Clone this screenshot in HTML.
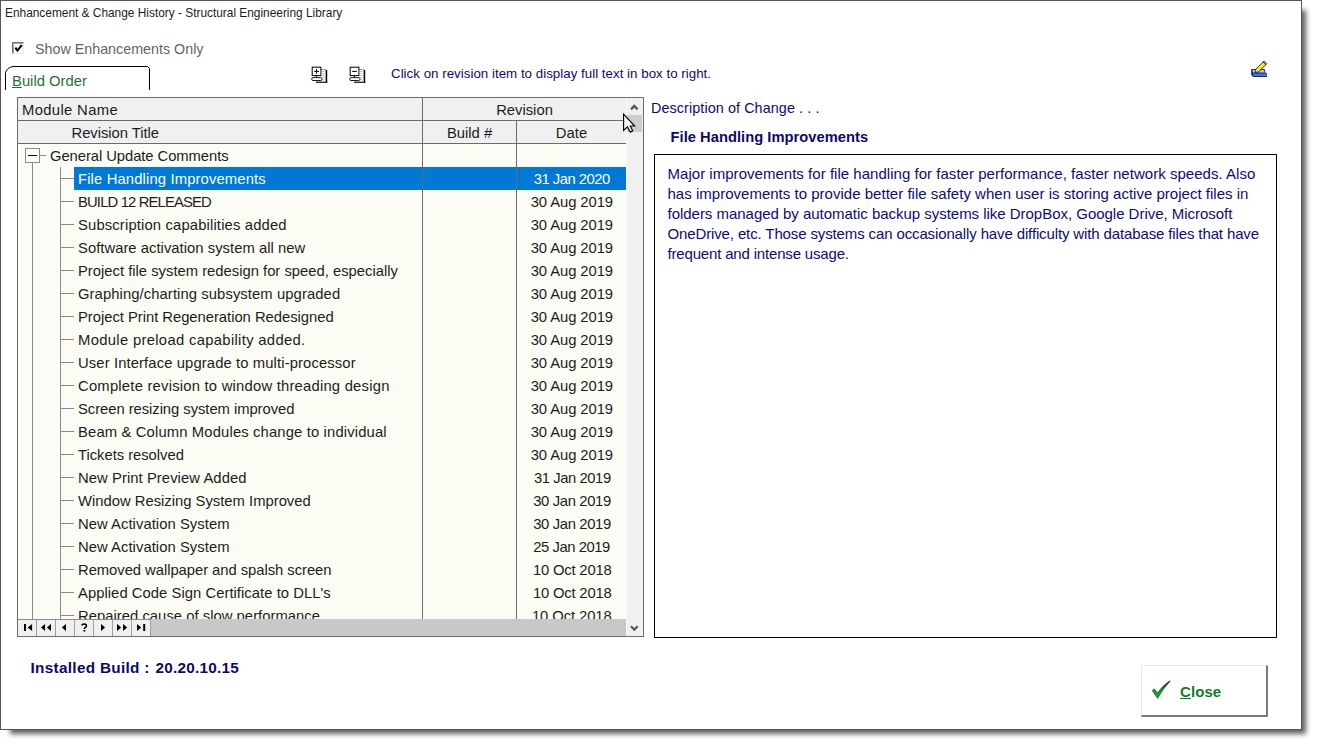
<!DOCTYPE html><html><head><meta charset="utf-8"><style>
html,body{margin:0;padding:0;background:#fff;width:1317px;height:745px;overflow:hidden;position:relative;font-family:"Liberation Sans",sans-serif;}
.t{position:absolute;white-space:pre;}
.a{position:absolute;}
</style></head><body>
<div class="a" style="left:0;top:0;width:1300px;height:728px;border:1px solid #555;background:#fff;box-shadow:7px 7px 5px -3px rgba(0,0,0,0.62);"></div>
<div class="t" style="left:5px;top:5.28px;font-size:11.9px;line-height:16px;color:#1c1c1c;letter-spacing:-0.007px;">Enhancement &amp; Change History - Structural Engineering Library</div>
<div class="a" style="left:12px;top:42px;width:10px;height:10px;border-top:1px solid #6e6e6e;border-left:1px solid #6e6e6e;border-right:1px solid #e8e8e8;border-bottom:1px solid #e8e8e8;box-shadow:inset 1px 1px 0 #a8a8a8;background:#fff;"></div>
<svg class="a" style="left:12px;top:42px" width="12" height="12" viewBox="0 0 12 12"><path d="M3.3 5.6 L5.4 8.6 L9.9 3" fill="none" stroke="#000" stroke-width="2.1"/></svg>
<div class="t" style="left:35px;top:40.05px;font-size:14.3px;line-height:18px;color:#646464;letter-spacing:-0.000px;">Show Enhancements Only</div>
<svg class="a" style="left:0;top:60px" width="160" height="36"><path d="M5.5 30 L5.5 12.5 Q7 7.5 13 6.5 L147.5 6.5 L149.5 8.5 L149.5 30" fill="none" stroke="#000" stroke-width="1"/></svg>
<div class="t" style="left:12px;top:71.87px;font-size:14.8px;line-height:18px;color:#1f7232;"><span style="text-decoration:underline;text-underline-offset:1px;text-decoration-thickness:1px">B</span>uild Order</div>
<svg class="a" style="left:311px;top:66px" width="18" height="18" viewBox="0 0 18 18"><rect x="14.9" y="4" width="1.3" height="12.8" fill="#000"/><rect x="5" y="15.4" width="11.2" height="1.4" fill="#000"/><rect x="5" y="3" width="10" height="12.4" fill="#fff"/><rect x="5" y="3" width="10" height="0.9" fill="#9a9a9a"/><rect x="14.1" y="3" width="0.9" height="12.4" fill="#9a9a9a"/><rect x="11.2" y="5.2" width="2.4" height="0.8" fill="#b8b8b8"/><rect x="11.2" y="7.2" width="2.4" height="0.8" fill="#b8b8b8"/><rect x="11.2" y="9.2" width="2.4" height="0.8" fill="#b8b8b8"/><rect x="11.2" y="11.2" width="2.4" height="0.8" fill="#b8b8b8"/><rect x="11.2" y="13.4" width="2.4" height="0.8" fill="#b8b8b8"/><rect x="1.2" y="1.2" width="8.7" height="8.4" fill="#fff" stroke="#000" stroke-width="1"/><rect x="3.2" y="4.9" width="4.7" height="1" fill="#000"/><rect x="5.05" y="3.1" width="1" height="4.6" fill="#000"/><rect x="4.9" y="9.6" width="1" height="1.4" fill="#000"/><rect x="0.8" y="11.6" width="10.1" height="2.9" rx="1.1" fill="#fff" stroke="#000" stroke-width="0.9"/></svg>
<svg class="a" style="left:349px;top:66px" width="18" height="18" viewBox="0 0 18 18"><rect x="14.9" y="4" width="1.3" height="12.8" fill="#000"/><rect x="5" y="15.4" width="11.2" height="1.4" fill="#000"/><rect x="5" y="3" width="10" height="12.4" fill="#fff"/><rect x="5" y="3" width="10" height="0.9" fill="#9a9a9a"/><rect x="14.1" y="3" width="0.9" height="12.4" fill="#9a9a9a"/><rect x="11.2" y="5.2" width="2.4" height="0.8" fill="#b8b8b8"/><rect x="11.2" y="7.2" width="2.4" height="0.8" fill="#b8b8b8"/><rect x="11.2" y="9.2" width="2.4" height="0.8" fill="#b8b8b8"/><rect x="11.2" y="11.2" width="2.4" height="0.8" fill="#b8b8b8"/><rect x="11.2" y="13.4" width="2.4" height="0.8" fill="#b8b8b8"/><rect x="1.2" y="1.2" width="8.7" height="8.4" fill="#fff" stroke="#000" stroke-width="1"/><rect x="3.2" y="4.9" width="4.7" height="1" fill="#000"/><rect x="4.9" y="9.6" width="1" height="1.4" fill="#000"/><rect x="0.8" y="11.6" width="10.1" height="2.9" rx="1.1" fill="#fff" stroke="#000" stroke-width="0.9"/></svg>
<div class="t" style="left:391px;top:64.59px;font-size:13.3px;line-height:17px;color:#0c0c78;letter-spacing:0.025px;">Click on revision item to display full text in box to right.</div>
<svg class="a" style="left:1250px;top:60px" width="18" height="18" viewBox="0 0 18 18">
<path d="M1.2 9.1 L14.7 9.1 L15.6 13 L16.8 13 L16.8 16.9 L3.1 16.9 L1.2 14.8 Z" fill="#1a237e"/>
<path d="M2.2 10 L14 10 L14.6 12.6 L3.2 12.6 Z" fill="#a9c8ec"/>
<path d="M2.6 13.4 L16 13.4 L16 16 L3.6 16 Z" fill="#4f6fd6"/>
<path d="M5.2 12.6 L5.9 9 L13 1.9 L15.8 4.7 L8.7 11.8 Z" fill="#f6e51a" stroke="#1a1a1a" stroke-width="0.85" stroke-linejoin="round"/>
<path d="M13 1.9 L14 0.9 L16.8 3.7 L15.8 4.7 Z" fill="#d8a0a8" stroke="#1a1a1a" stroke-width="0.8"/>
</svg>
<div class="a" style="left:17px;top:97px;width:625px;height:538px;border:1px solid #6b6b6b;background:#fbfdf4;"></div>
<div class="a" style="left:18px;top:98px;width:608px;height:45px;background:#f0f0f0;"></div>
<div class="a" style="left:18px;top:120px;width:608px;height:1px;background:#6b6b6b;"></div>
<div class="a" style="left:18px;top:143px;width:608px;height:1px;background:#6b6b6b;"></div>
<div class="a" style="left:626px;top:98px;width:17px;height:538px;background:#f0f0f0;border-left:1px solid #fafafa;box-sizing:border-box;"></div>
<div class="a" style="left:627px;top:115px;width:15px;height:17px;background:#cdcdcd;"></div>
<svg class="a" style="left:629px;top:102px" width="12" height="10"><path d="M2 7.4 L5.3 4 L8.6 7.4" fill="none" stroke="#555" stroke-width="2.3"/></svg>
<div class="a" style="left:74px;top:167px;width:552px;height:23px;background:#0078d7;"></div>
<div class="a" style="left:422px;top:98px;width:1px;height:521px;background:#6b6b6b;"></div>
<div class="a" style="left:516px;top:121px;width:1px;height:498px;background:#6b6b6b;"></div>
<div class="t" style="left:22px;top:100.57px;font-size:14.8px;line-height:18px;color:#1c1c1c;letter-spacing:0.350px;">Module Name</div>
<div class="t" style="left:424.5px;width:200px;text-align:center;top:100.57px;font-size:14.8px;line-height:18px;color:#1c1c1c;">Revision</div>
<div class="t" style="left:71.5px;top:123.67px;font-size:14.8px;line-height:18px;color:#1c1c1c;letter-spacing:-0.038px;">Revision Title</div>
<div class="t" style="left:424.5px;width:90px;text-align:center;top:123.67px;font-size:14.8px;line-height:18px;color:#1c1c1c;">Build #</div>
<div class="t" style="left:521.5px;width:100px;text-align:center;top:123.67px;font-size:14.8px;line-height:18px;color:#1c1c1c;">Date</div>
<div class="a" style="left:18px;top:144px;width:608px;height:475px;overflow:hidden;">
<div class="a" style="left:7px;top:4px;width:13px;height:13px;border:1px solid #8a8a8a;background:#fff;"></div>
<div class="a" style="left:10px;top:10.5px;width:9px;height:1.5px;background:#000;"></div>
<div class="a" style="left:22px;top:11px;width:6px;height:1px;background:#8a8a8a;"></div>
<div class="a" style="left:14px;top:19px;width:1px;height:460px;background:#8a8a8a;"></div>
<div class="a" style="left:42px;top:23px;width:1px;height:460px;background:#8a8a8a;"></div>
<div class="t" style="left:32px;top:2.67px;font-size:14.8px;line-height:18px;color:#1c1c1c;letter-spacing:-0.068px;">General Update Comments</div>
<div class="a" style="left:43px;top:34px;width:13px;height:1px;background:#8a8a8a;"></div>
<div class="t" style="left:60px;top:25.67px;font-size:14.8px;line-height:18px;color:#fff;letter-spacing:0.140px;">File Handling Improvements</div>
<div class="t" style="left:499.75px;width:108px;text-align:center;top:25.67px;font-size:14.8px;line-height:18px;color:#fff;letter-spacing:-0.510px;">31 Jan 2020</div>
<div class="a" style="left:43px;top:57px;width:13px;height:1px;background:#8a8a8a;"></div>
<div class="t" style="left:60px;top:48.67px;font-size:14.8px;line-height:18px;color:#1c1c1c;letter-spacing:-0.844px;">BUILD 12 RELEASED</div>
<div class="t" style="left:499.8499999999998px;width:108px;text-align:center;top:48.67px;font-size:14.8px;line-height:18px;color:#1c1c1c;letter-spacing:-0.070px;">30 Aug 2019</div>
<div class="a" style="left:43px;top:80px;width:13px;height:1px;background:#8a8a8a;"></div>
<div class="t" style="left:60px;top:71.67px;font-size:14.8px;line-height:18px;color:#1c1c1c;letter-spacing:0.150px;">Subscription capabilities added</div>
<div class="t" style="left:499.8499999999998px;width:108px;text-align:center;top:71.67px;font-size:14.8px;line-height:18px;color:#1c1c1c;letter-spacing:-0.070px;">30 Aug 2019</div>
<div class="a" style="left:43px;top:103px;width:13px;height:1px;background:#8a8a8a;"></div>
<div class="t" style="left:60px;top:94.67px;font-size:14.8px;line-height:18px;color:#1c1c1c;letter-spacing:0.030px;">Software activation system all new</div>
<div class="t" style="left:499.8499999999998px;width:108px;text-align:center;top:94.67px;font-size:14.8px;line-height:18px;color:#1c1c1c;letter-spacing:-0.070px;">30 Aug 2019</div>
<div class="a" style="left:43px;top:126px;width:13px;height:1px;background:#8a8a8a;"></div>
<div class="t" style="left:60px;top:117.67px;font-size:14.8px;line-height:18px;color:#1c1c1c;letter-spacing:-0.000px;">Project file system redesign for speed, especially</div>
<div class="t" style="left:499.8499999999998px;width:108px;text-align:center;top:117.67px;font-size:14.8px;line-height:18px;color:#1c1c1c;letter-spacing:-0.070px;">30 Aug 2019</div>
<div class="a" style="left:43px;top:149px;width:13px;height:1px;background:#8a8a8a;"></div>
<div class="t" style="left:60px;top:140.67px;font-size:14.8px;line-height:18px;color:#1c1c1c;letter-spacing:0.086px;">Graphing/charting subsystem upgraded</div>
<div class="t" style="left:499.8499999999998px;width:108px;text-align:center;top:140.67px;font-size:14.8px;line-height:18px;color:#1c1c1c;letter-spacing:-0.070px;">30 Aug 2019</div>
<div class="a" style="left:43px;top:172px;width:13px;height:1px;background:#8a8a8a;"></div>
<div class="t" style="left:60px;top:163.67px;font-size:14.8px;line-height:18px;color:#1c1c1c;letter-spacing:-0.028px;">Project Print Regeneration Redesigned</div>
<div class="t" style="left:499.8499999999998px;width:108px;text-align:center;top:163.67px;font-size:14.8px;line-height:18px;color:#1c1c1c;letter-spacing:-0.070px;">30 Aug 2019</div>
<div class="a" style="left:43px;top:195px;width:13px;height:1px;background:#8a8a8a;"></div>
<div class="t" style="left:60px;top:186.67px;font-size:14.8px;line-height:18px;color:#1c1c1c;letter-spacing:0.323px;">Module preload capability added.</div>
<div class="t" style="left:499.8499999999998px;width:108px;text-align:center;top:186.67px;font-size:14.8px;line-height:18px;color:#1c1c1c;letter-spacing:-0.070px;">30 Aug 2019</div>
<div class="a" style="left:43px;top:218px;width:13px;height:1px;background:#8a8a8a;"></div>
<div class="t" style="left:60px;top:209.67px;font-size:14.8px;line-height:18px;color:#1c1c1c;letter-spacing:0.113px;">User Interface upgrade to multi-processor</div>
<div class="t" style="left:499.8499999999998px;width:108px;text-align:center;top:209.67px;font-size:14.8px;line-height:18px;color:#1c1c1c;letter-spacing:-0.070px;">30 Aug 2019</div>
<div class="a" style="left:43px;top:241px;width:13px;height:1px;background:#8a8a8a;"></div>
<div class="t" style="left:60px;top:232.67px;font-size:14.8px;line-height:18px;color:#1c1c1c;letter-spacing:0.221px;">Complete revision to window threading design</div>
<div class="t" style="left:499.8499999999998px;width:108px;text-align:center;top:232.67px;font-size:14.8px;line-height:18px;color:#1c1c1c;letter-spacing:-0.070px;">30 Aug 2019</div>
<div class="a" style="left:43px;top:264px;width:13px;height:1px;background:#8a8a8a;"></div>
<div class="t" style="left:60px;top:255.67px;font-size:14.8px;line-height:18px;color:#1c1c1c;letter-spacing:-0.050px;">Screen resizing system improved</div>
<div class="t" style="left:499.8499999999998px;width:108px;text-align:center;top:255.67px;font-size:14.8px;line-height:18px;color:#1c1c1c;letter-spacing:-0.070px;">30 Aug 2019</div>
<div class="a" style="left:43px;top:287px;width:13px;height:1px;background:#8a8a8a;"></div>
<div class="t" style="left:60px;top:278.67px;font-size:14.8px;line-height:18px;color:#1c1c1c;letter-spacing:0.144px;">Beam &amp; Column Modules change to individual</div>
<div class="t" style="left:499.8499999999998px;width:108px;text-align:center;top:278.67px;font-size:14.8px;line-height:18px;color:#1c1c1c;letter-spacing:-0.070px;">30 Aug 2019</div>
<div class="a" style="left:43px;top:310px;width:13px;height:1px;background:#8a8a8a;"></div>
<div class="t" style="left:60px;top:301.67px;font-size:14.8px;line-height:18px;color:#1c1c1c;letter-spacing:-0.033px;">Tickets resolved</div>
<div class="t" style="left:499.8499999999998px;width:108px;text-align:center;top:301.67px;font-size:14.8px;line-height:18px;color:#1c1c1c;letter-spacing:-0.070px;">30 Aug 2019</div>
<div class="a" style="left:43px;top:333px;width:13px;height:1px;background:#8a8a8a;"></div>
<div class="t" style="left:60px;top:324.67px;font-size:14.8px;line-height:18px;color:#1c1c1c;letter-spacing:0.068px;">New Print Preview Added</div>
<div class="t" style="left:500.3499999999998px;width:108px;text-align:center;top:324.67px;font-size:14.8px;line-height:18px;color:#1c1c1c;letter-spacing:-0.430px;">31 Jan 2019</div>
<div class="a" style="left:43px;top:356px;width:13px;height:1px;background:#8a8a8a;"></div>
<div class="t" style="left:60px;top:347.67px;font-size:14.8px;line-height:18px;color:#1c1c1c;letter-spacing:-0.000px;">Window Resizing System Improved</div>
<div class="t" style="left:500.0px;width:108px;text-align:center;top:347.67px;font-size:14.8px;line-height:18px;color:#1c1c1c;letter-spacing:-0.360px;">30 Jan 2019</div>
<div class="a" style="left:43px;top:379px;width:13px;height:1px;background:#8a8a8a;"></div>
<div class="t" style="left:60px;top:370.67px;font-size:14.8px;line-height:18px;color:#1c1c1c;letter-spacing:0.050px;">New Activation System</div>
<div class="t" style="left:500.0px;width:108px;text-align:center;top:370.67px;font-size:14.8px;line-height:18px;color:#1c1c1c;letter-spacing:-0.360px;">30 Jan 2019</div>
<div class="a" style="left:43px;top:402px;width:13px;height:1px;background:#8a8a8a;"></div>
<div class="t" style="left:60px;top:393.67px;font-size:14.8px;line-height:18px;color:#1c1c1c;letter-spacing:0.050px;">New Activation System</div>
<div class="t" style="left:499.5500000000004px;width:108px;text-align:center;top:393.67px;font-size:14.8px;line-height:18px;color:#1c1c1c;letter-spacing:-0.430px;">25 Jan 2019</div>
<div class="a" style="left:43px;top:425px;width:13px;height:1px;background:#8a8a8a;"></div>
<div class="t" style="left:60px;top:416.67px;font-size:14.8px;line-height:18px;color:#1c1c1c;letter-spacing:-0.044px;">Removed wallpaper and spalsh screen</div>
<div class="t" style="left:500.25px;width:108px;text-align:center;top:416.67px;font-size:14.8px;line-height:18px;color:#1c1c1c;letter-spacing:-0.190px;">10 Oct 2018</div>
<div class="a" style="left:43px;top:448px;width:13px;height:1px;background:#8a8a8a;"></div>
<div class="t" style="left:60px;top:439.67px;font-size:14.8px;line-height:18px;color:#1c1c1c;letter-spacing:0.041px;">Applied Code Sign Certificate to DLL's</div>
<div class="t" style="left:500.25px;width:108px;text-align:center;top:439.67px;font-size:14.8px;line-height:18px;color:#1c1c1c;letter-spacing:-0.190px;">10 Oct 2018</div>
<div class="a" style="left:43px;top:471px;width:13px;height:1px;background:#8a8a8a;"></div>
<div class="t" style="left:60px;top:462.67px;font-size:14.8px;line-height:18px;color:#1c1c1c;letter-spacing:0.030px;">Repaired cause of slow performance</div>
<div class="t" style="left:499.75px;width:108px;text-align:center;top:462.67px;font-size:14.8px;line-height:18px;color:#1c1c1c;letter-spacing:-0.090px;">10 Oct 2018</div>
</div>
<div class="a" style="left:18px;top:619px;width:608px;height:17px;background:#c8c8c8;"></div>
<div class="a" style="left:18px;top:619px;width:133px;height:1px;background:#8c8c8c;"></div>
<div class="a" style="left:18px;top:620px;width:18px;height:16px;background:#f0f0f0;border-right:1px solid #a0a0a0;"></div>
<div class="a" style="left:37px;top:620px;width:18px;height:16px;background:#f0f0f0;border-right:1px solid #a0a0a0;"></div>
<div class="a" style="left:56px;top:620px;width:18px;height:16px;background:#f0f0f0;border-right:1px solid #a0a0a0;"></div>
<div class="a" style="left:75px;top:620px;width:18px;height:16px;background:#f0f0f0;border-right:1px solid #a0a0a0;"></div>
<div class="a" style="left:94px;top:620px;width:18px;height:16px;background:#f0f0f0;border-right:1px solid #a0a0a0;"></div>
<div class="a" style="left:113px;top:620px;width:18px;height:16px;background:#f0f0f0;border-right:1px solid #a0a0a0;"></div>
<div class="a" style="left:132px;top:620px;width:18px;height:16px;background:#f0f0f0;border-right:1px solid #a0a0a0;"></div>
<svg class="a" style="left:0;top:600px" width="160" height="40">
<rect x="24" y="24" width="2" height="7" fill="#000"/><path d="M27.6 27.5 L32.1 23.9 L32.1 31.1 Z" fill="#000"/>
<path d="M41 27.5 L45.1 23.9 L45.1 31.1 Z M46.9 27.5 L51 23.9 L51 31.1 Z" fill="#000"/>
<path d="M61.9 27.5 L66 23.9 L66 31.1 Z" fill="#000"/>
<path d="M105.1 27.5 L101 23.9 L101 31.1 Z" fill="#000"/>
<path d="M121.2 27.5 L117 23.9 L117 31.1 Z M127.2 27.5 L123 23.9 L123 31.1 Z" fill="#000"/>
<path d="M141.2 27.5 L137 23.9 L137 31.1 Z" fill="#000"/><rect x="143.2" y="24" width="2" height="7" fill="#000"/>
<path d="M82 25.6 Q82 24 84.2 24 Q86.4 24 86.4 25.8 Q86.4 27 85.2 27.6 Q84.4 28 84.4 29" fill="none" stroke="#000" stroke-width="1.6"/><rect x="83.5" y="30" width="1.8" height="1.6" fill="#000"/>
</svg>
<svg class="a" style="left:629px;top:624px" width="12" height="10"><path d="M2 2.3 L5.3 5.7 L8.6 2.3" fill="none" stroke="#555" stroke-width="2.3"/></svg>
<div class="t" style="left:651px;top:98.81px;font-size:14.4px;line-height:18px;color:#0c0c78;letter-spacing:0.077px;">Description of Change . . .</div>
<div class="t" style="left:670.5px;top:128.41px;font-size:14.7px;line-height:18px;color:#0a0a6e;font-weight:700;letter-spacing:0.040px;">File Handling Improvements</div>
<div class="a" style="left:654px;top:154px;width:621px;height:482px;border:1px solid #000;background:#fff;"></div>
<div class="t" style="left:667.5px;top:163.90px;font-size:15px;line-height:19px;color:#0c0c78;letter-spacing:0.029px;">Major improvements for file handling for faster performance, faster network speeds. Also</div>
<div class="t" style="left:667.5px;top:183.80px;font-size:15px;line-height:19px;color:#0c0c78;letter-spacing:0.017px;">has improvements to provide better file safety when user is storing active project files in</div>
<div class="t" style="left:667.5px;top:203.70px;font-size:15px;line-height:19px;color:#0c0c78;letter-spacing:-0.025px;">folders managed by automatic backup systems like DropBox, Google Drive, Microsoft</div>
<div class="t" style="left:667.5px;top:223.60px;font-size:15px;line-height:19px;color:#0c0c78;letter-spacing:-0.128px;">OneDrive, etc. Those systems can occasionally have difficulty with database files that have</div>
<div class="t" style="left:667.5px;top:243.50px;font-size:15px;line-height:19px;color:#0c0c78;letter-spacing:-0.173px;">frequent and intense usage.</div>
<div class="t" style="left:30.5px;top:657.90px;font-size:15.3px;line-height:19px;color:#0a0a6e;font-weight:700;letter-spacing:0.312px;">Installed Build :</div>
<div class="t" style="left:155.5px;top:657.90px;font-size:15.3px;line-height:19px;color:#0a0a6e;font-weight:700;letter-spacing:0.250px;">20.20.10.15</div>
<div class="a" style="left:1141px;top:665px;width:124px;height:49px;border-top:1px solid #e6e6e6;border-left:1px solid #e6e6e6;border-right:2px solid #7a7a7a;border-bottom:2px solid #7a7a7a;background:#fff;"></div>
<svg class="a" style="left:1150px;top:679px" width="22" height="22" viewBox="0 0 22 22"><defs><linearGradient id="ck" x1="0" y1="1" x2="1" y2="0"><stop offset="0" stop-color="#18b02e"/><stop offset="0.45" stop-color="#13962a"/><stop offset="1" stop-color="#0a2e10"/></linearGradient></defs><path d="M2.2 11.4 L4.5 9.9 L7.5 14 Q12.8 6.2 19.8 1.8 L20.2 2.3 Q13.6 8.8 7.6 19.4 Z" fill="url(#ck)" stroke="#0a4a14" stroke-width="0.6" stroke-linejoin="round"/></svg>
<div class="t" style="left:1180px;top:682.00px;font-size:15px;line-height:19px;color:#0f7d1f;font-weight:700;letter-spacing:0.075px;"><span style="text-decoration:underline;text-underline-offset:1px;text-decoration-thickness:1px">C</span>lose</div>
<svg class="a" style="left:622px;top:113px" width="16" height="22" viewBox="0 0 16 22"><path d="M1.6 1.2 L1.6 17.4 L5.4 13.9 L8.4 19.1 L10.7 17.7 L8.2 13 L12.6 13 Z" fill="#fff" stroke="#000" stroke-width="1.15" stroke-linejoin="miter"/></svg>
</body></html>
